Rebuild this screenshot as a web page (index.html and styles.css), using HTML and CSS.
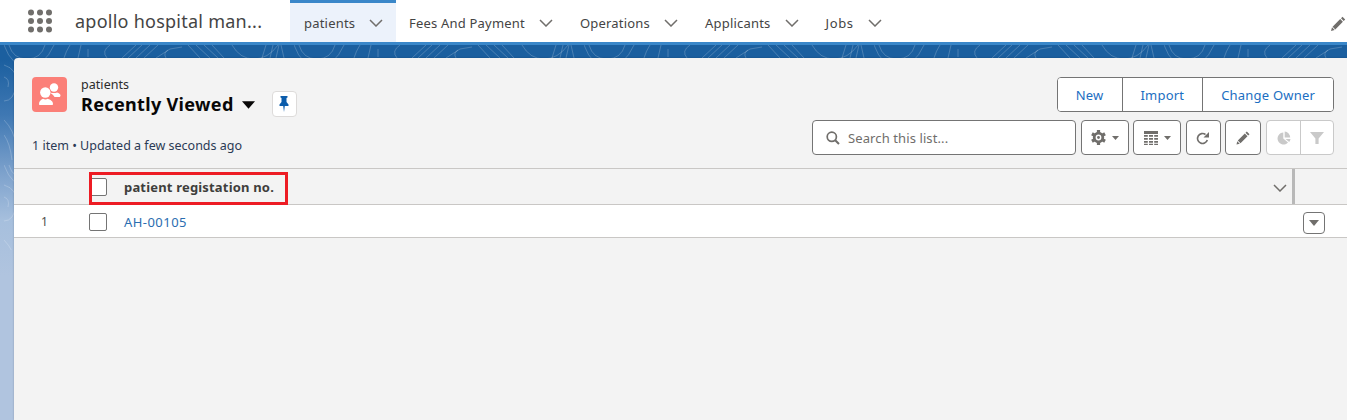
FILE: index.html
```html
<!DOCTYPE html>
<html lang="en">
<head>
<meta charset="utf-8">
<title>patients</title>
<link rel="stylesheet" href="styles.css">
</head>
<body>
<nav class="nav">
  <div class="launcher">
    <svg width="26" height="24" viewBox="0 0 26 24" class="dots"><g fill="#706e6b"><circle cx="4" cy="3.500" r="3"/><circle cx="13" cy="3.500" r="3"/><circle cx="22" cy="3.500" r="3"/><circle cx="4" cy="12" r="3"/><circle cx="13" cy="12" r="3"/><circle cx="22" cy="12" r="3"/><circle cx="4" cy="20.500" r="3"/><circle cx="13" cy="20.500" r="3"/><circle cx="22" cy="20.500" r="3"/></g></svg>
  </div>
  <div class="app-name">apollo hospital man...</div>
  <div class="tab tab-active"><span>patients</span><svg class="chev" viewBox="0 0 14 8"><path d="M1 1l6 6 6-6" fill="none" stroke="#706e6b" stroke-width="1.500"/></svg></div>
  <div class="tab"><span>Fees And Payment</span><svg class="chev" viewBox="0 0 14 8"><path d="M1 1l6 6 6-6" fill="none" stroke="#706e6b" stroke-width="1.500"/></svg></div>
  <div class="tab"><span>Operations</span><svg class="chev" viewBox="0 0 14 8"><path d="M1 1l6 6 6-6" fill="none" stroke="#706e6b" stroke-width="1.500"/></svg></div>
  <div class="tab"><span>Applicants</span><svg class="chev" viewBox="0 0 14 8"><path d="M1 1l6 6 6-6" fill="none" stroke="#706e6b" stroke-width="1.500"/></svg></div>
  <div class="tab tab-jobs"><span>Jobs</span><svg class="chev" viewBox="0 0 14 8"><path d="M1 1l6 6 6-6" fill="none" stroke="#706e6b" stroke-width="1.500"/></svg></div>
  <svg class="nav-pencil" width="15" height="15" viewBox="0 0 15 15"><path d="M11.500 .8l2.700 2.700-1.500 1.500-2.700-2.700zM9.200 3.100l2.700 2.700-7.600 7.600-2.700-2.700zM1 11.300l2.700 2.700-3.700 1z" fill="#706e6b"/></svg>
</nav>
<div class="stage">
  <svg class="topo" width="1347" height="205" aria-hidden="true">
    <defs>
      <pattern id="topo" width="290" height="120" patternUnits="userSpaceOnUse" patternTransform="translate(4 0)">
        <g fill="none" stroke="#fff" stroke-opacity=".2" stroke-width="1">
          <path d="M5 0q4 14 18 14t18-14"/>
          <path d="M0 0q8 22 24 22t26-22" />
          <path d="M60 13q2-7 6-13M74 13l3-13M84 4v8"/>
          <path d="M103 13q-6-7 3-13"/>
          <path d="M118 13l14-13M124 13l14-13M132 13l14-13M140 13l14-13M152 13l14-9 12-2"/>
          <path d="M162 13q-3-5 2-8"/>
          <path d="M208 0l12 13M200 0l14 13M192 0l14 13M184 0l12 13"/>
          <path d="M228 0q8 14 22 14t24-14"/>
          <path d="M258 13l4-13M266 13l3-13M272 13l3-13M280 13l-3-13"/>
          <path d="M0 20q14 4 12 20t-12 16"/>
          <path d="M0 32q6 2 4 10"/>
          <path d="M0 75q10 10 12 25M0 90q6 8 8 25"/>
        </g>
      </pattern>
    </defs>
    <rect width="1347" height="205" fill="url(#topo)"/>
  </svg>
  <main class="panel">
    <header class="list-head">
      <div class="head-top">
        <div class="title-group">
          <div class="obj-icon">
            <svg width="35" height="35" viewBox="0 0 35 35"><g fill="#fff"><circle cx="22" cy="10.500" r="4.200"/><path d="M18.500 15.500c1 .8 5.500.8 6.500 0 2 .7 3.500 1.600 3.500 3 0 .9-.5 1.500-1.500 1.500H22.500c-.6-1.600-2-2.900-4-3.800z"/><circle cx="13.300" cy="15.500" r="5.200"/><path d="M7 27c0-2.800 2-4.200 4-5.200 1.400.8 3.400.8 4.800 0 2.600 1 5.200 2.400 5.200 5.200 0 .6-.4 1-1 1H8c-.6 0-1-.4-1-1z"/></g></svg>
          </div>
          <div class="titles">
            <div class="obj-name">patients</div>
            <div class="view-name">Recently Viewed <svg class="view-caret" width="13" height="8" viewBox="0 0 14 8"><path d="M0 0h14L7 8z" fill="#080707"/></svg></div>
          </div>
          <button class="pin" type="button"><svg width="10" height="16" viewBox="0 0 10 16"><path d="M1.500 0h7v1.500L7.500 2v4l2 2.500V10H5.800L5 16l-.8-6H.5V8.500l2-2.500V2l-1-.5z" fill="#0b5cab"/></svg></button>
        </div>
        <div class="btn-group">
          <button class="btn" type="button">New</button>
          <button class="btn" type="button">Import</button>
          <button class="btn" type="button">Change Owner</button>
        </div>
      </div>
      <div class="head-bottom">
        <div class="meta">1 item • Updated a few seconds ago</div>
        <div class="tools">
          <div class="search">
            <svg width="14" height="14" viewBox="0 0 14 14"><circle cx="5.800" cy="5.800" r="4.600" fill="none" stroke="#706e6b" stroke-width="1.700"/><path d="M9.200 9.200L13 13" stroke="#706e6b" stroke-width="2"/></svg>
            <span>Search this list...</span>
          </div>
          <button class="tool tool-menu" type="button">
            <svg width="15" height="15" viewBox="0 0 14 14"><g fill="none" stroke="#706e6b"><circle cx="7" cy="7" r="4" stroke-width="2.600"/><path d="M7 0v3M7 11v3M.9 3.500l2.600 1.500M10.500 9l2.600 1.500M.9 10.500L3.500 9M10.500 5l2.600-1.500" stroke-width="3"/></g><circle cx="7" cy="7" r="1.300" fill="#706e6b"/></svg>
            <svg class="mini" width="7" height="4" viewBox="0 0 7 4"><path d="M0 0h7L3.500 4z" fill="#706e6b"/></svg>
          </button>
          <button class="tool tool-menu" type="button">
            <svg width="14" height="14" viewBox="0 0 14 14"><path d="M0 0h14v3H0z" fill="#706e6b"/><path d="M0 4h3.800v1.800H0zM5 4h4v1.800H5zM10.200 4H14v1.800h-3.800zM0 7h3.800v1.800H0zM5 7h4v1.800H5zM10.200 7H14v1.800h-3.800zM0 10h3.800v1.800H0zM5 10h4v1.800H5zM10.200 10H14v1.800h-3.800zM0 12.800h3.800V14H0zM5 12.800h4V14H5zM10.200 12.800H14V14h-3.800z" fill="#706e6b"/></svg>
            <svg class="mini" width="7" height="4" viewBox="0 0 7 4"><path d="M0 0h7L3.500 4z" fill="#706e6b"/></svg>
          </button>
          <button class="tool tool-refresh" type="button"><svg width="14" height="14" viewBox="0 0 14 14"><path d="M9.500 3.500A5 5 0 1 0 11.300 9" fill="none" stroke="#706e6b" stroke-width="1.600"/><path d="M13 1v5.500H7.500z" fill="#706e6b"/></svg></button>
          <button class="tool tool-edit" type="button"><svg width="14" height="14" viewBox="0 0 14 14"><path d="M10.800.5l2.700 2.700-1.300 1.300-2.700-2.700zM8.800 2.500l2.700 2.700-7 7-2.700-2.700zM1.200 10.200l2.600 2.600-3.300.7z" fill="#706e6b"/></svg></button>
          <div class="ghost-group">
            <button class="ghost" type="button"><svg width="14" height="14" viewBox="0 0 14 14"><path d="M6.300 1.500V7.500l4.700 4a6 6 0 1 1-4.700-10z" fill="#c9c9c9"/><path d="M7.700.5a6 6 0 0 1 5.500 6H7.700z" fill="#c9c9c9"/><path d="M8.500 8h5a6 6 0 0 1-1.300 3z" fill="#c9c9c9"/></svg></button>
            <button class="ghost" type="button"><svg width="14" height="14" viewBox="0 0 14 14"><path d="M0 1h14L8.600 7.500V13H5.400V7.500z" fill="#c9c9c9"/></svg></button>
          </div>
        </div>
      </div>
    </header>
    <div class="grid-head">
      <div class="col-num"></div>
      <div class="col-check"><span class="check"></span></div>
      <div class="col-name">patient registation no.</div>
      <svg class="head-chev" width="14" height="8" viewBox="0 0 14 8"><path d="M1 1l6 6 6-6" fill="none" stroke="#706e6b" stroke-width="1.500"/></svg>
      <div class="col-end"></div>
      <div class="redbox"></div>
    </div>
    <div class="grid-row">
      <div class="col-num">1</div>
      <div class="col-check"><span class="check"></span></div>
      <a class="col-name link" href="#">AH-00105</a>
      <button class="row-menu" type="button"><svg width="10" height="6" viewBox="0 0 10 6"><path d="M0 0h10L5 6z" fill="#706e6b"/></svg></button>
    </div>
  </main>
</div>
</body>
</html>
```

FILE: styles.css
```css
* { box-sizing: border-box; }
html, body { margin: 0; height: 420px; overflow: hidden; }
body { font-family: "Noto Sans", "Open Sans", sans-serif; font-size: 13px; color: #3e3e3c; background: #fff; display: flex; flex-direction: column; }
button { font-family: inherit; padding: 0; margin: 0; }

.nav { height: 45px; flex: none; display: flex; align-items: stretch; background: #fff; border-bottom: 3px solid #3a87c9; position: relative; }
.launcher { width: 75px; display: flex; align-items: center; padding-left: 27px; }
.app-name { width: 215px; font-size: 18px; letter-spacing: .25px; line-height: 42px; color: #444; white-space: nowrap; }
.tab { display: flex; align-items: center; padding: 0 14px; gap: 14px; font-size: 13px; letter-spacing: .2px; color: #444; border-top: 3px solid transparent; }
.tab + .tab { padding-left: 13px; padding-right: 14px; }
.tab-active { background: #ecf2fb; border-top-color: #3a87c9; width: 106px; }
.tab-jobs { letter-spacing: .65px; }
.chev { width: 14px; height: 8px; flex: none; margin-top: 1px; }
.nav-pencil { position: absolute; right: 1px; top: 16px; }

.stage { flex: 1; position: relative; padding: 13px 0 0 14px; background: linear-gradient(180deg, #1b5f9f 0, #1b5f9f 14px, #3f78b3 70px, #7fa3cd 130px, #a6bfdd 175px, #b0c4df 230px); display: flex; min-height: 0; }
.topo { position: absolute; left: 0; top: 0; }
.panel { flex: 1; position: relative; background: #f3f3f3; border-radius: 4px 0 0 0; box-shadow: 0 0 2px rgba(0,0,0,.25); display: flex; flex-direction: column; }

.list-head { height: 110px; flex: none; padding: 19px 13px 0 18px; display: flex; flex-direction: column; }
.head-top { display: flex; justify-content: space-between; align-items: flex-start; height: 45px; }
.title-group { display: flex; align-items: flex-start; }
.obj-icon { width: 35px; height: 35px; background: #fb7f78; border-radius: 4px; display: flex; align-items: center; justify-content: center; }
.titles { margin-left: 14px; }
.obj-name { font-size: 12.5px; letter-spacing: .05px; line-height: 16px; color: #2b2b2b; }
.view-name { font-size: 18px; font-weight: 700; letter-spacing: .35px; line-height: 24px; color: #080707; display: flex; align-items: center; white-space: nowrap; margin-top: -1px; }
.view-caret { margin-left: 8px; margin-top: 2px; }
.pin { width: 25px; height: 26px; margin: 14px 0 0 17px; background: #fff; border: 1px solid #dddbda; border-radius: 4px; display: flex; align-items: center; justify-content: center; }

.btn-group { display: flex; height: 35px; background: #fff; border: 1px solid #747474; border-radius: 4px; overflow: hidden; }
.btn { height: 100%; background: #fff; border: 0; font-size: 13px; letter-spacing: .2px; color: #1b6ec2; padding: 0 18px; }
.btn + .btn { border-left: 1px solid #747474; }

.head-bottom { display: flex; justify-content: space-between; align-items: flex-start; }
.meta { font-size: 12.5px; line-height: 16px; color: #2b3a55; margin-top: 16px; }
.tools { display: flex; align-items: center; gap: 4.6px; margin-top: -2px; }
.search { width: 264px; height: 35px; background: #fff; border: 1px solid #747474; border-radius: 4px; display: flex; align-items: center; gap: 8px; padding-left: 13px; color: #706e6b; font-size: 13px; letter-spacing: .1px; }
.tool { height: 35px; background: #fff; border: 1px solid #747474; border-radius: 4px; display: flex; align-items: center; justify-content: center; }
.tool-menu { width: 48px; gap: 6px; }
.tool-refresh { width: 35px; }
.tool-edit { width: 36px; }
.mini { flex: none; }
.ghost-group { display: flex; height: 35px; background: #fff; border: 1px solid #c9c9c9; border-radius: 4px; }
.ghost { width: 33px; background: none; border: 0; display: flex; align-items: center; justify-content: center; }
.ghost + .ghost { width: 33px; border-left: 1px solid #c9c9c9; }

.grid-head { position: relative; height: 37px; flex: none; display: flex; align-items: center; border-top: 1px solid #c9c7c5; border-bottom: 1px solid #c9c7c5; }
.col-num { width: 60px; flex: none; padding-left: 1px; text-align: center; font-size: 12px; color: #514f4d; }
.col-check { width: 48px; margin-right: 2px; flex: none; display: flex; justify-content: center; padding-top: 1px; }
.check { display: block; width: 18px; height: 18px; background: #fff; border: 1px solid #747474; border-radius: 2px; }
.col-name { font-size: 13px; font-weight: 700; letter-spacing: .18px; color: #3e3e3c; flex: 1; }
.head-chev { position: absolute; right: 60px; top: 15px; }
.col-end { width: 3px; height: 100%; background: #b8b8b8; position: absolute; right: 52px; top: 0; }
.redbox { position: absolute; left: 75px; top: 3px; width: 199px; height: 33px; border: 3px solid #ed1c24; }

.grid-row { height: 33px; flex: none; display: flex; align-items: center; background: #fff; border-bottom: 1px solid #c9c7c5; position: relative; }
.link { color: #2a6db0; font-weight: 400; text-decoration: none; font-size: 13px; letter-spacing: .45px; padding-top: 1px; }
.row-menu { position: absolute; right: 22px; top: 7px; width: 22px; height: 22px; background: #fff; border: 1px solid #747474; border-radius: 4px; display: flex; align-items: center; justify-content: center; }
```
